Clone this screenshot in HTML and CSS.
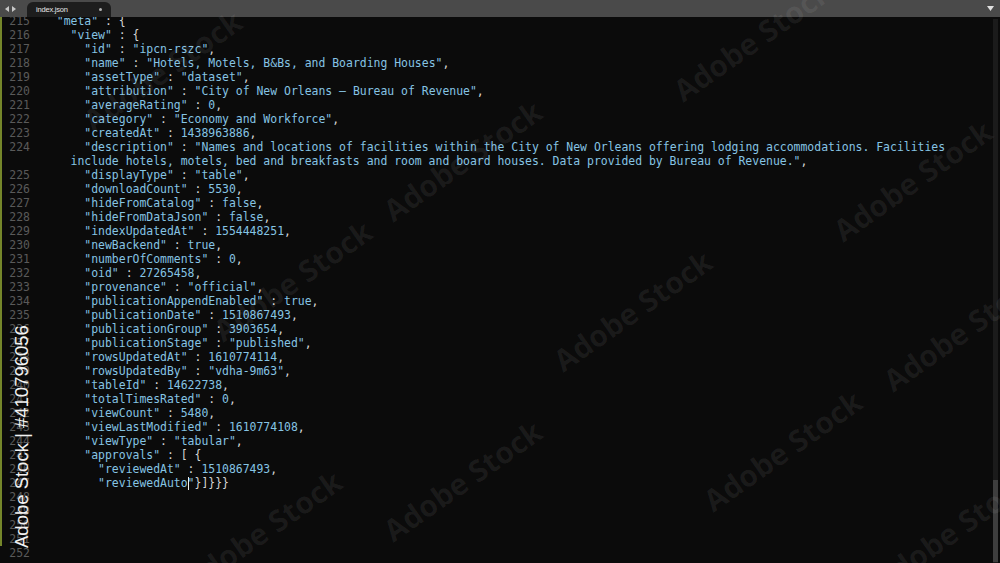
FILE: index.html
```html
<!DOCTYPE html>
<html lang="en">
<head>
    <meta charset="UTF-8">
    <title>index.json</title>
    <link rel="stylesheet" href="styles.css">
</head>
<body>
    <!-- tab bar -->
    <div class="tabbar">
        <div class="nav-arrows">
            <svg width="11" height="6" viewBox="0 0 11 6"><path d="M4 0 L0 3 L4 6 Z" fill="#c8c8c8"/><path d="M7 0 L11 3 L7 6 Z" fill="#c8c8c8"/></svg>
        </div>
        <div class="tab">
            <span class="tab-name">index.json</span>
            <span class="tab-dot"></span>
        </div>
        <div class="tab-spacer"></div>
        <svg class="tab-menu" width="7" height="5" viewBox="0 0 7 5"><path d="M0 0 L7 0 L3.5 5 Z" fill="#e0e0e0"/></svg>
    </div>

    <div class="editor">
        <div class="lines">
            <div class="row"><span class="ln">215</span><span class="code">  "meta" <span class="p">: {</span></span></div>
            <div class="row"><span class="ln">216</span><span class="code">    "view" <span class="p">: {</span></span></div>
            <div class="row"><span class="ln">217</span><span class="code">      "id" <span class="p">:</span> "ipcn-rszc"<span class="p">,</span></span></div>
            <div class="row"><span class="ln">218</span><span class="code">      "name" <span class="p">:</span> "Hotels, Motels, B&amp;Bs, and Boarding Houses"<span class="p">,</span></span></div>
            <div class="row"><span class="ln">219</span><span class="code">      "assetType" <span class="p">:</span> "dataset"<span class="p">,</span></span></div>
            <div class="row"><span class="ln">220</span><span class="code">      "attribution" <span class="p">:</span> "City of New Orleans – Bureau of Revenue"<span class="p">,</span></span></div>
            <div class="row"><span class="ln">221</span><span class="code">      "averageRating" <span class="p">:</span> 0<span class="p">,</span></span></div>
            <div class="row"><span class="ln">222</span><span class="code">      "category" <span class="p">:</span> "Economy and Workforce"<span class="p">,</span></span></div>
            <div class="row"><span class="ln">223</span><span class="code">      "createdAt" <span class="p">:</span> 1438963886<span class="p">,</span></span></div>
            <div class="row"><span class="ln">224</span><span class="code">      "description" <span class="p">:</span> "Names and locations of facilities within the City of New Orleans offering lodging accommodations. Facilities</span></div>
            <div class="row"><span class="ln"></span><span class="code">    include hotels, motels, bed and breakfasts and room and board houses. Data provided by Bureau of Revenue."<span class="p">,</span></span></div>
            <div class="row"><span class="ln">225</span><span class="code">      "displayType" <span class="p">:</span> "table"<span class="p">,</span></span></div>
            <div class="row"><span class="ln">226</span><span class="code">      "downloadCount" <span class="p">:</span> 5530<span class="p">,</span></span></div>
            <div class="row"><span class="ln">227</span><span class="code">      "hideFromCatalog" <span class="p">:</span> false<span class="p">,</span></span></div>
            <div class="row"><span class="ln">228</span><span class="code">      "hideFromDataJson" <span class="p">:</span> false<span class="p">,</span></span></div>
            <div class="row"><span class="ln">229</span><span class="code">      "indexUpdatedAt" <span class="p">:</span> 1554448251<span class="p">,</span></span></div>
            <div class="row"><span class="ln">230</span><span class="code">      "newBackend" <span class="p">:</span> true<span class="p">,</span></span></div>
            <div class="row"><span class="ln">231</span><span class="code">      "numberOfComments" <span class="p">:</span> 0<span class="p">,</span></span></div>
            <div class="row"><span class="ln">232</span><span class="code">      "oid" <span class="p">:</span> 27265458<span class="p">,</span></span></div>
            <div class="row"><span class="ln">233</span><span class="code">      "provenance" <span class="p">:</span> "official"<span class="p">,</span></span></div>
            <div class="row"><span class="ln">234</span><span class="code">      "publicationAppendEnabled" <span class="p">:</span> true<span class="p">,</span></span></div>
            <div class="row"><span class="ln">235</span><span class="code">      "publicationDate" <span class="p">:</span> 1510867493<span class="p">,</span></span></div>
            <div class="row"><span class="ln">236</span><span class="code">      "publicationGroup" <span class="p">:</span> 3903654<span class="p">,</span></span></div>
            <div class="row"><span class="ln">237</span><span class="code">      "publicationStage" <span class="p">:</span> "published"<span class="p">,</span></span></div>
            <div class="row"><span class="ln">238</span><span class="code">      "rowsUpdatedAt" <span class="p">:</span> 1610774114<span class="p">,</span></span></div>
            <div class="row"><span class="ln">239</span><span class="code">      "rowsUpdatedBy" <span class="p">:</span> "vdha-9m63"<span class="p">,</span></span></div>
            <div class="row"><span class="ln">240</span><span class="code">      "tableId" <span class="p">:</span> 14622738<span class="p">,</span></span></div>
            <div class="row"><span class="ln">241</span><span class="code">      "totalTimesRated" <span class="p">:</span> 0<span class="p">,</span></span></div>
            <div class="row"><span class="ln">242</span><span class="code">      "viewCount" <span class="p">:</span> 5480<span class="p">,</span></span></div>
            <div class="row"><span class="ln">243</span><span class="code">      "viewLastModified" <span class="p">:</span> 1610774108<span class="p">,</span></span></div>
            <div class="row"><span class="ln">244</span><span class="code">      "viewType" <span class="p">:</span> "tabular"<span class="p">,</span></span></div>
            <div class="row"><span class="ln">245</span><span class="code">      "approvals" <span class="p">: [ {</span></span></div>
            <div class="row"><span class="ln">246</span><span class="code">        "reviewedAt" <span class="p">:</span> 1510867493<span class="p">,</span></span></div>
            <div class="row"><span class="ln">247</span><span class="code">        "reviewedAuto<span class="cursor"></span>"<span class="p">}]}}}</span></span></div>
            <div class="row"><span class="ln">248</span><span class="code"></span></div>
            <div class="row"><span class="ln">249</span><span class="code"></span></div>
            <div class="row"><span class="ln">250</span><span class="code"></span></div>
            <div class="row"><span class="ln">251</span><span class="code"></span></div>
            <div class="row last"><span class="ln">252</span><span class="code"></span></div>
        </div>
        <div class="scrollbar">
            <div class="thumb"></div>
        </div>
    </div>

    <!-- stock watermark over everything -->
    <div class="wm wm1">Adobe Stock</div>
    <div class="wm wm2">Adobe Stock</div>
    <div class="wm wm3">Adobe Stock</div>
    <div class="wm wm4">Adobe Stock</div>
    <div class="wm wm5">Adobe Stock</div>
    <div class="wm wm6">Adobe Stock</div>
    <div class="wm wm7">Adobe Stock</div>
    <div class="wm wm8">Adobe Stock</div>
    <div class="wm wm9">Adobe Stock</div>
    <div class="wm wm10">Adobe Stock</div>
    <div class="wm wm11">Adobe Stock</div>
    <div class="wm-side">Adobe Stock | #410796056</div>
</body>
</html>
```

FILE: styles.css
```css
html {
    overflow: hidden;
}
body {
    margin: 0;
    width: 1000px;
    height: 563px;
    overflow: hidden;
    background-color: #0b0b0b;
    position: relative;
}
.tabbar {
    position: relative;
    z-index: 2;
    display: flex;
    align-items: flex-end;
    height: 17px;
    background-color: #4a4a4a;
    font-family: "Liberation Sans", Arial, sans-serif;
}
.nav-arrows {
    display: flex;
    align-items: center;
    height: 17px;
    padding-left: 5px;
    width: 22px;
}
.tab {
    display: flex;
    align-items: center;
    justify-content: space-between;
    width: 84px;
    height: 15px;
    padding: 0 9px 0 9px;
    box-sizing: border-box;
    background-color: #1d1d1d;
    border-radius: 6px 6px 0 0;
}
.tab-name {
    color: #e6e6e6;
    font-size: 7.5px;
    letter-spacing: -0.2px;
}
.tab-dot {
    width: 3px;
    height: 3px;
    border-radius: 50%;
    background-color: #b0b0b0;
}
.tab-spacer {
    flex: 1;
}
.tab-menu {
    align-self: center;
    margin-right: 6px;
}
.editor {
    display: flex;
    height: 546px;
    overflow: hidden;
}
.lines {
    flex: 1;
    margin-top: -3px;
    font-family: "DejaVu Sans Mono", monospace;
    font-size: 11.45px;
    line-height: 14px;
}
.row {
    display: flex;
    height: 14px;
    white-space: pre;
}
.ln {
    width: 43px;
    flex: none;
    box-sizing: border-box;
    padding-right: 13px;
    text-align: right;
    color: #5a5a5a;
    border-left: 2px solid #74862a;
}
.row.last .ln {
    border-left-color: transparent;
}
.code {
    color: #86c4e4;
}
.p {
    color: #d6d6d6;
}
.cursor {
    display: inline-block;
    width: 1px;
    height: 13px;
    margin-right: -1px;
    vertical-align: -3px;
    background-color: #f0f0f0;
}
.scrollbar {
    display: flex;
    flex-direction: column;
    justify-content: flex-end;
    width: 5px;
    margin: 2px 2px 0 0;
    background-color: #1b1b1b;
}
.thumb {
    height: 82px;
    margin-bottom: 1px;
    background-color: #3e3e3e;
}
.wm {
    position: absolute;
    z-index: 3;
    font-family: "Open Sans", "Liberation Sans", sans-serif;
    font-weight: bold;
    font-size: 30px;
    color: rgba(255, 255, 255, 0.065);
    transform: rotate(-35deg);
    white-space: nowrap;
}
.wm1 { left: 70px; top: 50px; }
.wm2 { left: 660px; top: 20px; }
.wm3 { left: 370px; top: 140px; }
.wm4 { left: 820px; top: 160px; }
.wm5 { left: 200px; top: 260px; }
.wm6 { left: 540px; top: 290px; }
.wm7 { left: 870px; top: 310px; }
.wm8 { left: 690px; top: 430px; }
.wm9 { left: 370px; top: 460px; }
.wm10 { left: 170px; top: 510px; }
.wm11 { left: 860px; top: 510px; }
.wm-side {
    position: absolute;
    z-index: 4;
    left: 12px;
    top: 548px;
    transform: rotate(-90deg);
    transform-origin: 0 0;
    font-family: "Liberation Sans", Arial, sans-serif;
    font-size: 18.5px;
    line-height: 19px;
    color: #f2f2f2;
    white-space: nowrap;
}
```
